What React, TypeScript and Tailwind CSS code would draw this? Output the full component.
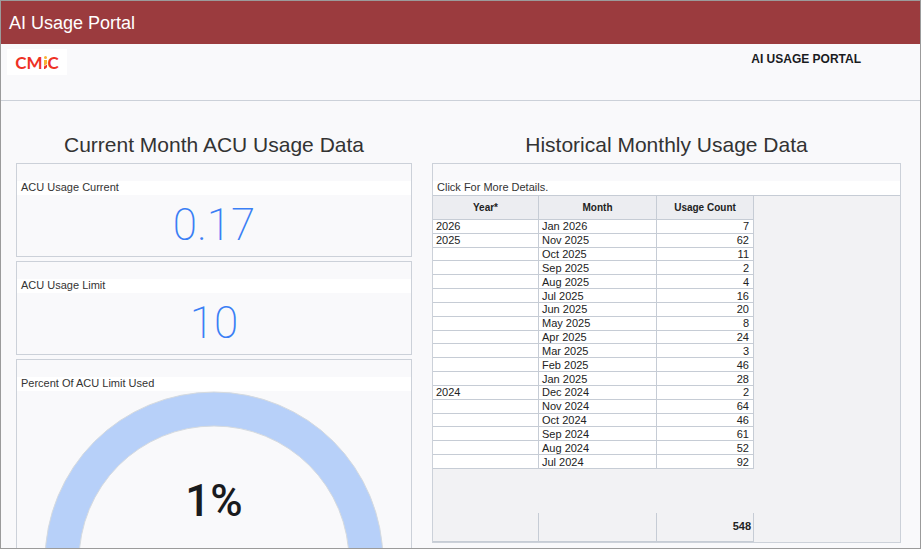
import type { ReactNode } from 'react';

const usage = [
  { year: '2026', month: 'Jan 2026', count: 7 },
  { year: '2025', month: 'Nov 2025', count: 62 },
  { year: '', month: 'Oct 2025', count: 11 },
  { year: '', month: 'Sep 2025', count: 2 },
  { year: '', month: 'Aug 2025', count: 4 },
  { year: '', month: 'Jul 2025', count: 16 },
  { year: '', month: 'Jun 2025', count: 20 },
  { year: '', month: 'May 2025', count: 8 },
  { year: '', month: 'Apr 2025', count: 24 },
  { year: '', month: 'Mar 2025', count: 3 },
  { year: '', month: 'Feb 2025', count: 46 },
  { year: '', month: 'Jan 2025', count: 28 },
  { year: '2024', month: 'Dec 2024', count: 2 },
  { year: '', month: 'Nov 2024', count: 64 },
  { year: '', month: 'Oct 2024', count: 46 },
  { year: '', month: 'Sep 2024', count: 61 },
  { year: '', month: 'Aug 2024', count: 52 },
  { year: '', month: 'Jul 2024', count: 92 },
];

const total = usage.reduce((sum, row) => sum + row.count, 0);

function Logo() {
  return (
    <div className="flex h-[26px] w-[60px] items-center justify-center bg-white font-['Lato',sans-serif] text-[17px] leading-none font-bold text-[#ee3124]">
      <span>CM</span>
      <svg viewBox="0 0 5 13" className="h-[13px] w-[5px]" aria-hidden="true">
        <circle cx="2.5" cy="1.6" r="1.5" fill="#f9b233" />
        <path d="M1 4h3v3.8L1 10z" fill="#f9b233" />
        <path d="M1 10.6L4 8.4v2.8L2 13H1z" fill="#ee3124" />
      </svg>
      <span>C</span>
    </div>
  );
}

function Panel({ title, children }: { title: string; children: ReactNode }) {
  return (
    <section className="border border-[#ccd1d9] pt-[17px]">
      <h3 className="bg-white px-1 pb-[2px] text-[11px] leading-3 text-[#333]">{title}</h3>
      {children}
    </section>
  );
}

function Metric({ title, value }: { title: string; value: string }) {
  return (
    <Panel title={title}>
      <p className="h-[61px] text-center font-['Roboto',sans-serif] text-[44px] leading-[60px] font-extralight text-[#3b7ff5]">
        {value}
      </p>
    </Panel>
  );
}

// Half ring, the value text sits in the middle of it
function Gauge({ value }: { value: string }) {
  return (
    <div className="relative h-[190px]">
      <svg viewBox="0 0 340 190" className="mx-auto h-[190px] w-[340px]" aria-hidden="true">
        <path
          d="M1 170A169 169 0 0 1 339 170H305A135 135 0 0 0 35 170Z"
          fill="#b7d0f9"
          stroke="#d5dadf"
          strokeWidth="1"
        />
      </svg>
      <p className="absolute inset-x-0 top-20 text-center font-['Roboto',sans-serif] text-[44px] leading-[60px] font-medium text-[#191b1e]">
        {value}
      </p>
    </div>
  );
}

function UsageTable() {
  return (
    <table className="h-[346px] w-[321px] table-fixed border-separate border-spacing-0 text-[11px] leading-3 text-[#222]">
      <colgroup>
        <col className="w-[106px]" />
        <col className="w-[118px]" />
        <col className="w-[97px]" />
      </colgroup>
      <thead>
        <tr className="h-6 bg-[#ecedf1] text-[10px] [&>th]:border-r [&>th]:border-b [&>th]:border-[#c6ccd5]">
          <th className="p-0">Year*</th>
          <th className="p-0">Month</th>
          <th className="p-0">Usage Count</th>
        </tr>
      </thead>
      <tbody>
        {usage.map((row) => (
          <tr key={row.month} className="bg-white [&>td]:border-r [&>td]:border-b [&>td]:border-[#c6ccd5]">
            <td className="py-0 px-[3px]">{row.year}</td>
            <td className="py-0 px-[3px]">{row.month}</td>
            <td className="py-0 pr-1 text-right">{row.count}</td>
          </tr>
        ))}
        <tr className="h-11">
          <td colSpan={3} className="p-0"></td>
        </tr>
      </tbody>
      <tfoot>
        <tr className="h-[29px] font-bold [&>td]:border-r [&>td]:border-b [&>td]:border-[#c6ccd5]">
          <td className="p-0"></td>
          <td className="p-0"></td>
          <td className="pt-0 pr-[2px] pb-[2px] text-right">{total}</td>
        </tr>
      </tfoot>
    </table>
  );
}

export default function App() {
  return (
    <div className="h-screen overflow-hidden border border-[#9b9b9b] bg-[#f9f9fb] font-['Liberation_Sans',Arial,sans-serif]">
      <header className="flex h-[43px] items-center bg-[#9b3b3e] px-2">
        <h1 className="text-lg text-white">AI Usage Portal</h1>
      </header>

      <div className="flex h-[57px] items-start justify-between border-b border-[#ccd1d9] pt-[5px] pr-[59px] pl-[6px]">
        <Logo />
        <p className="text-xs leading-[20px] font-bold text-[#191b1e]">AI USAGE PORTAL</p>
      </div>

      <main className="grid grid-cols-[396fr_469fr] gap-5 pt-[30px] pr-[19px] pl-[15px]">
        <div>
          <h2 className="h-8 text-center text-[21px] leading-7 text-[#333]">Current Month ACU Usage Data</h2>
          <div className="flex flex-col gap-1">
            <Metric title="ACU Usage Current" value="0.17" />
            <Metric title="ACU Usage Limit" value="10" />
            <Panel title="Percent Of ACU Limit Used">
              <Gauge value="1%" />
            </Panel>
          </div>
        </div>
        <div>
          <h2 className="h-8 text-center text-[21px] leading-7 text-[#333]">Historical Monthly Usage Data</h2>
          <Panel title="Click For More Details.">
            <div className="border-t border-[#c6ccd5] bg-[#f2f2f4]">
              <UsageTable />
            </div>
          </Panel>
        </div>
      </main>
    </div>
  );
}
